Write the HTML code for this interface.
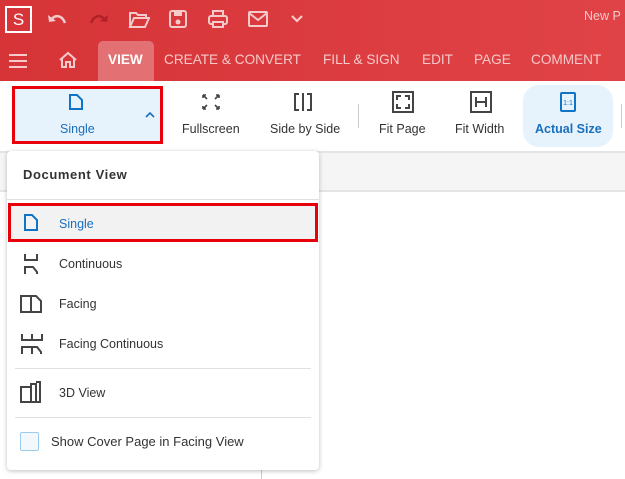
<!DOCTYPE html>
<html><head><style>
*{margin:0;padding:0;box-sizing:border-box}
body{width:625px;height:479px;overflow:hidden;font-family:"Liberation Sans",sans-serif;background:#fff;position:relative}
.red{position:absolute;left:0;top:0;width:625px;height:81px;background:linear-gradient(90deg,#d63437,#e04347)}
.abs{position:absolute}
.tab{position:absolute;top:52px;color:#f6c9ca;font-size:13.6px}
.tb{position:absolute;top:121px;font-size:12.5px;color:#333;text-align:center}
.mi{position:absolute;left:59px;font-size:12.5px;color:#333}
svg{position:absolute}
</style></head><body>
<div class="red"></div>
<div class="abs" style="left:5px;top:6px;width:27px;height:27px;border:2px solid #fff;color:#fff;font-size:17px;text-align:center;line-height:23px">S</div>
<svg style="left:46px;top:10px" width="24" height="20" viewBox="0 0 24 20"><path d="M5 10 C9 4,16 5,19 13" fill="none" stroke="#f6c9ca" stroke-width="2.5"/><path d="M2 5 L3 12 L10 11Z" fill="#f6c9ca"/></svg>
<svg style="left:86px;top:10px" width="24" height="20" viewBox="0 0 24 20"><path d="M19 10 C15 4,8 5,5 13" fill="none" stroke="#b02226" stroke-width="2.5"/><path d="M22 5 L21 12 L14 11Z" fill="#b02226"/></svg>
<svg style="left:128px;top:10px" width="22" height="20" viewBox="0 0 22 20"><path d="M2 17V3h6l2 2h8v3M2 17l4-9h15l-4 9Z" fill="none" stroke="#f6c9ca" stroke-width="2"/></svg>
<svg style="left:168px;top:9px" width="20" height="20" viewBox="0 0 20 20"><rect x="2" y="2" width="16" height="16" rx="2" fill="none" stroke="#f6c9ca" stroke-width="2"/><rect x="6" y="3" width="8" height="4" fill="#f6c9ca"/><circle cx="10" cy="13" r="2.5" fill="#f6c9ca"/></svg>
<svg style="left:207px;top:9px" width="22" height="20" viewBox="0 0 22 20"><rect x="6" y="2" width="10" height="5" fill="none" stroke="#f6c9ca" stroke-width="2"/><rect x="2" y="7" width="18" height="8" rx="2" fill="none" stroke="#f6c9ca" stroke-width="2"/><rect x="6" y="13" width="10" height="5" fill="#d63437" stroke="#f6c9ca" stroke-width="2"/></svg>
<svg style="left:247px;top:10px" width="22" height="18" viewBox="0 0 22 18"><rect x="2" y="2" width="18" height="14" rx="1" fill="none" stroke="#f6c9ca" stroke-width="2"/><path d="M2 3l9 7 9-7" fill="none" stroke="#f6c9ca" stroke-width="2"/></svg>
<svg style="left:290px;top:14px" width="14" height="10" viewBox="0 0 14 10"><path d="M2 2l5 5 5-5" fill="none" stroke="#f6c9ca" stroke-width="2.2"/></svg>
<div class="abs" style="left:584px;top:9px;color:#f6c9ca;font-size:12.5px">New P</div>
<svg style="left:8px;top:53px" width="20" height="16"><path d="M1 2h18M1 8h18M1 14h18" stroke="#f6c9ca" stroke-width="2"/></svg>
<svg style="left:58px;top:51px" width="20" height="18" viewBox="0 0 20 18"><path d="M2 9L10 2l8 7M4 8v8h4v-5h4v5h4V8" fill="none" stroke="#f6c9ca" stroke-width="2"/></svg>
<div class="abs" style="left:98px;top:41px;width:56px;height:40px;background:#e37072;border-radius:5px 5px 0 0"></div>
<div class="tab" style="left:108px;color:#fff;font-weight:bold">VIEW</div>
<div class="tab" style="left:164px">CREATE &amp; CONVERT</div>
<div class="tab" style="left:323px">FILL &amp; SIGN</div>
<div class="tab" style="left:422px">EDIT</div>
<div class="tab" style="left:474px">PAGE</div>
<div class="tab" style="left:531px">COMMENT</div>
<div class="abs" style="left:12px;top:86px;width:151px;height:58px;background:#e6f2fc;border:3px solid #e8000b"></div>
<svg style="left:68px;top:93px" width="16" height="18" viewBox="0 0 16 18"><path d="M2 2h7l5 5v9H2Z" fill="none" stroke="#0f74c6" stroke-width="2"/></svg>
<div class="tb" style="left:60px;top:122px;color:#1a6fbd">Single</div>
<svg style="left:145px;top:111px" width="10" height="7"><path d="M1 6l4-4 4 4" fill="none" stroke="#1a6fbd" stroke-width="1.6"/></svg>
<svg style="left:201px;top:93px" width="20" height="18" viewBox="0 0 20 18"><path d="M2 2l4 4M2 2v3M2 2h3M18 2l-4 4M18 2v3M18 2h-3M2 16l4-4M2 16v-3M2 16h3M18 16l-4-4M18 16v-3M18 16h-3" stroke="#444" stroke-width="1.6" fill="none"/></svg>
<div class="tb" style="left:182px;top:122px">Fullscreen</div>
<svg style="left:293px;top:92px" width="20" height="20" viewBox="0 0 20 20"><path d="M6 2H2v16h4M14 2h4v16h-4M10 1v18" stroke="#444" stroke-width="2" fill="none"/></svg>
<div class="tb" style="left:270px;top:122px">Side by Side</div>
<div class="abs" style="left:358px;top:104px;width:1px;height:24px;background:#ccc"></div>
<svg style="left:392px;top:91px" width="22" height="22" viewBox="0 0 22 22"><rect x="1" y="1" width="20" height="20" fill="none" stroke="#444" stroke-width="2"/><path d="M5 9V5h4M13 5h4v4M17 13v4h-4M9 17H5v-4" stroke="#444" stroke-width="2" fill="none"/></svg>
<div class="tb" style="left:379px;top:122px">Fit Page</div>
<svg style="left:470px;top:91px" width="22" height="22" viewBox="0 0 22 22"><rect x="1" y="1" width="20" height="20" fill="none" stroke="#444" stroke-width="2"/><path d="M6 6v10M16 6v10M6 11h10" stroke="#444" stroke-width="2" fill="none"/></svg>
<div class="tb" style="left:455px;top:122px">Fit Width</div>
<div class="abs" style="left:523px;top:85px;width:90px;height:62px;background:#e6f2fc;border-radius:16px"></div>
<svg style="left:560px;top:92px" width="16" height="20" viewBox="0 0 16 20"><rect x="1" y="1" width="14" height="18" rx="1" fill="none" stroke="#0f74c6" stroke-width="2"/><text x="8" y="13" font-size="7" fill="#0f74c6" text-anchor="middle" font-family="Liberation Sans">1:1</text></svg>
<div class="tb" style="left:535px;top:122px;color:#1a6fbd;font-weight:bold">Actual Size</div>
<div class="abs" style="left:621px;top:104px;width:1px;height:24px;background:#ccc"></div>
<div class="abs" style="left:0;top:151px;width:625px;height:2px;background:#e4e4e4"></div>
<div class="abs" style="left:0;top:153px;width:625px;height:39px;background:#f5f5f5;border-bottom:2px solid #e4e4e4"></div>
<div class="abs" style="left:261px;top:192px;width:1px;height:287px;background:#ccc"></div>
<div class="abs" style="left:7px;top:151px;width:312px;height:319px;background:#fff;border-radius:4px;box-shadow:0 1px 5px rgba(0,0,0,.25)"></div>
<div class="abs" style="left:23px;top:167px;font-size:13px;font-weight:bold;color:#333;letter-spacing:.6px">Document View</div>
<div class="abs" style="left:7px;top:199px;width:312px;height:1px;background:#e0e0e0"></div>
<div class="abs" style="left:8px;top:203px;width:310px;height:39px;background:#f2f2f2;border:3px solid #e8000b"></div>
<svg style="left:23px;top:214px" width="16" height="18" viewBox="0 0 16 18"><path d="M2 1h7l5 5v10H2Z" fill="none" stroke="#0f74c6" stroke-width="2"/></svg>
<div class="mi" style="top:217px;color:#1a6fbd">Single</div>
<svg style="left:22px;top:253px" width="18" height="22" viewBox="0 0 18 22"><path d="M3 1v6h12V1M3 21v-7h8l4 5v2" fill="none" stroke="#444" stroke-width="2"/></svg>
<div class="mi" style="top:257px">Continuous</div>
<svg style="left:19px;top:294px" width="24" height="20" viewBox="0 0 24 20"><path d="M2 2h15l5 5v11H2ZM12 2v16" fill="none" stroke="#444" stroke-width="2"/></svg>
<div class="mi" style="top:297px">Facing</div>
<svg style="left:20px;top:333px" width="24" height="22" viewBox="0 0 24 22"><path d="M2 1v6h20V1M12 1v6M2 21v-7h15l4 5v2M12 14v7" fill="none" stroke="#444" stroke-width="2"/></svg>
<div class="mi" style="top:337px">Facing Continuous</div>
<div class="abs" style="left:15px;top:368px;width:296px;height:1px;background:#e0e0e0"></div>
<svg style="left:19px;top:380px" width="24" height="24" viewBox="0 0 24 24"><path d="M2 7h10v15H2ZM12 7V4h5v18M17 2h4v20H12" fill="none" stroke="#444" stroke-width="2"/></svg>
<div class="mi" style="top:386px">3D View</div>
<div class="abs" style="left:15px;top:417px;width:296px;height:1px;background:#e0e0e0"></div>
<div class="abs" style="left:20px;top:432px;width:19px;height:19px;border:1px solid #9ccbf0;background:#f3f8fd;border-radius:2px"></div>
<div class="abs" style="left:51px;top:434px;font-size:13px;color:#333">Show Cover Page in Facing View</div>
</body></html>
